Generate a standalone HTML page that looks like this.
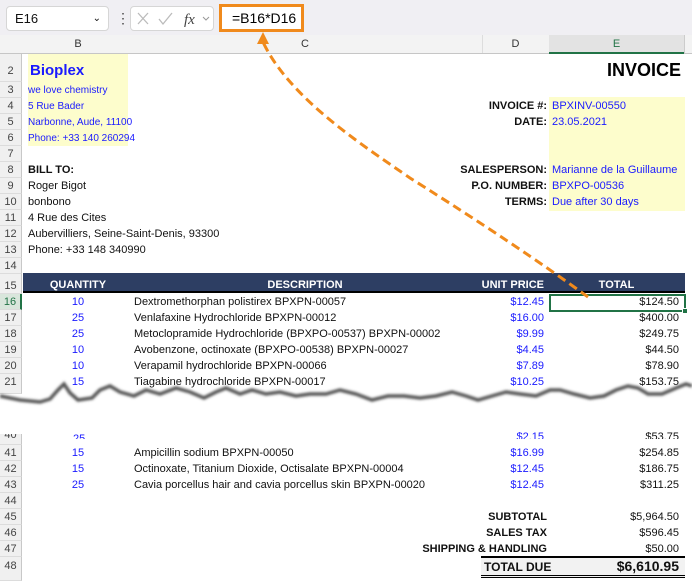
<!DOCTYPE html>
<html><head><meta charset="utf-8"><style>
*{margin:0;padding:0;box-sizing:border-box}
body{width:692px;height:581px;overflow:hidden;background:#fff;font-family:"Liberation Sans",sans-serif;font-size:11px;color:#111;position:relative}
.a{position:absolute;white-space:nowrap}
.rh{position:absolute;left:0;width:22px;background:#f0f0f0;border-right:1px solid #c8c8c8;border-bottom:1px solid #dcdcdc;text-align:center;color:#444;font-size:11px}
.bl{color:#1a1aff}
.b{font-weight:bold}
.r{text-align:right}
.c{text-align:center}
</style></head><body>
<div class="a" style="left:0;top:0;width:692px;height:35px;background:#f0eff3"></div>
<div class="a" style="left:6px;top:6px;width:103px;height:25px;background:#fff;border:1px solid #d6d6d6;border-radius:4px;font-size:13px;line-height:23px;padding-left:8px">E16<span style="position:absolute;right:7px;top:0;font-size:10px">&#8964;</span></div>
<div class="a" style="left:116px;top:10px;font-size:14px;color:#444;line-height:16px">&#8942;</div>
<div class="a" style="left:130px;top:6px;width:84px;height:25px;background:#fff;border:1px solid #d6d6d6;border-radius:4px"></div>
<svg class="a" style="left:130px;top:6px" width="84" height="25"><path d="M8 7l10 11M18 7L8 18" stroke="#bbb" stroke-width="1.3" fill="none"/><path d="M29 13l4 5 9-11" stroke="#bbb" stroke-width="1.3" fill="none"/><text x="54" y="18" font-family="Liberation Serif" font-style="italic" font-size="15" fill="#444">fx</text><path d="M73 11l3 3 3-3" stroke="#999" fill="none"/></svg>
<div class="a" style="left:219px;top:4px;width:85px;height:28px;border:3px solid #f08a1c;background:#fff;font-size:14px;line-height:22px;padding-left:10px;color:#000">=B16*D16</div>
<div class="a" style="left:0;top:35px;width:692px;height:19px;background:#f3f3f3;border-bottom:1px solid #c6c6c6"></div>
<div class="a c" style="left:28px;top:38px;width:100px;color:#333">B</div>
<div class="a c" style="left:128px;top:38px;width:354px;color:#333">C</div>
<div class="a" style="left:482px;top:35px;width:1px;height:18px;background:#ddd"></div>
<div class="a c" style="left:482px;top:38px;width:67px;color:#333">D</div>
<div class="a" style="left:549px;top:35px;width:135px;height:19px;background:#e3e3e3;border-bottom:2px solid #217346"></div>
<div class="a c" style="left:549px;top:38px;width:135px;color:#217346">E</div>
<div class="a" style="left:684px;top:35px;width:1px;height:18px;background:#ccc"></div>
<div class="rh" style="top:54px;height:28px;line-height:34px">2</div>
<div class="rh" style="top:82px;height:16px;line-height:16px">3</div>
<div class="rh" style="top:98px;height:16px;line-height:16px">4</div>
<div class="rh" style="top:114px;height:16px;line-height:16px">5</div>
<div class="rh" style="top:130px;height:16px;line-height:16px">6</div>
<div class="rh" style="top:146px;height:16px;line-height:16px">7</div>
<div class="rh" style="top:162px;height:16px;line-height:16px">8</div>
<div class="rh" style="top:178px;height:16px;line-height:16px">9</div>
<div class="rh" style="top:194px;height:16px;line-height:16px">10</div>
<div class="rh" style="top:210px;height:16px;line-height:16px">11</div>
<div class="rh" style="top:226px;height:16px;line-height:16px">12</div>
<div class="rh" style="top:242px;height:16px;line-height:16px">13</div>
<div class="rh" style="top:258px;height:16px;line-height:16px">14</div>
<div class="rh" style="top:274px;height:20px;line-height:24px">15</div>
<div class="rh" style="top:294px;height:16px;line-height:16px;background:#d9e6dc;color:#217346;border-right:2px solid #217346">16</div>
<div class="rh" style="top:310px;height:16px;line-height:16px">17</div>
<div class="rh" style="top:326px;height:16px;line-height:16px">18</div>
<div class="rh" style="top:342px;height:16px;line-height:16px">19</div>
<div class="rh" style="top:358px;height:16px;line-height:16px">20</div>
<div class="rh" style="top:374px;height:20px;line-height:16px">21</div>
<div class="rh" style="top:429px;height:16px;line-height:12px;overflow:hidden">40</div>
<div class="rh" style="top:445px;height:16px;line-height:16px">41</div>
<div class="rh" style="top:461px;height:16px;line-height:16px">42</div>
<div class="rh" style="top:477px;height:16px;line-height:16px">43</div>
<div class="rh" style="top:493px;height:16px;line-height:16px">44</div>
<div class="rh" style="top:509px;height:16px;line-height:16px">45</div>
<div class="rh" style="top:525px;height:16px;line-height:16px">46</div>
<div class="rh" style="top:541px;height:16px;line-height:16px">47</div>
<div class="rh" style="top:557px;height:24px;line-height:18px">48</div>
<div class="a" style="left:28px;top:54px;width:100px;height:92px;background:#fdfdcc"></div>
<div class="a" style="left:549px;top:97px;width:136px;height:114px;background:#fdfdcc"></div>
<div class="a b bl" style="left:30px;top:62px;font-size:15px">Bioplex</div>
<div class="a bl" style="left:28px;top:85px;font-size:10px">we love chemistry</div>
<div class="a bl" style="left:28px;top:101px;font-size:10px">5 Rue Bader</div>
<div class="a bl" style="left:28px;top:117px;font-size:10px">Narbonne, Aude, 11100</div>
<div class="a bl" style="left:28px;top:133px;font-size:10px">Phone: +33 140 260294</div>
<div class="a b" style="left:607px;top:60px;font-size:18px;color:#000">INVOICE</div>
<div class="a b r" style="left:400px;width:147px;top:100px">INVOICE #:</div>
<div class="a bl" style="left:552px;top:100px">BPXINV-00550</div>
<div class="a b r" style="left:400px;width:147px;top:116px">DATE:</div>
<div class="a bl" style="left:552px;top:116px">23.05.2021</div>
<div class="a b r" style="left:400px;width:147px;top:164px">SALESPERSON:</div>
<div class="a bl" style="left:552px;top:164px">Marianne de la Guillaume</div>
<div class="a b r" style="left:400px;width:147px;top:180px">P.O. NUMBER:</div>
<div class="a bl" style="left:552px;top:180px">BPXPO-00536</div>
<div class="a b r" style="left:400px;width:147px;top:196px">TERMS:</div>
<div class="a bl" style="left:552px;top:196px">Due after 30 days</div>
<div class="a b" style="left:28px;top:164px">BILL TO:</div>
<div class="a" style="left:28px;top:180px">Roger Bigot</div>
<div class="a" style="left:28px;top:196px">bonbono</div>
<div class="a" style="left:28px;top:212px">4 Rue des Cites</div>
<div class="a" style="left:28px;top:228px">Aubervilliers, Seine-Saint-Denis, 93300</div>
<div class="a" style="left:28px;top:244px">Phone: +33 148 340990</div>
<div class="a" style="left:23px;top:273px;width:662px;height:20px;background:#2d3e63;border-bottom:2px solid #000"></div>
<div class="a b c" style="left:28px;width:100px;top:279px;color:#fff">QUANTITY</div>
<div class="a b c" style="left:128px;width:354px;top:279px;color:#fff">DESCRIPTION</div>
<div class="a b r" style="left:460px;width:84px;top:279px;color:#fff">UNIT PRICE</div>
<div class="a b c" style="left:549px;width:135px;top:279px;color:#fff">TOTAL</div>
<div class="a bl c" style="left:28px;width:100px;top:296px">10</div><div class="a" style="left:134px;top:296px">Dextromethorphan polistirex BPXPN-00057</div><div class="a bl r" style="left:460px;width:84px;top:296px">$12.45</div><div class="a r" style="left:560px;width:119px;top:296px">$124.50</div>
<div class="a bl c" style="left:28px;width:100px;top:312px">25</div><div class="a" style="left:134px;top:312px">Venlafaxine Hydrochloride BPXPN-00012</div><div class="a bl r" style="left:460px;width:84px;top:312px">$16.00</div><div class="a r" style="left:560px;width:119px;top:312px">$400.00</div>
<div class="a bl c" style="left:28px;width:100px;top:328px">25</div><div class="a" style="left:134px;top:328px">Metoclopramide Hydrochloride (BPXPO-00537) BPXPN-00002</div><div class="a bl r" style="left:460px;width:84px;top:328px">$9.99</div><div class="a r" style="left:560px;width:119px;top:328px">$249.75</div>
<div class="a bl c" style="left:28px;width:100px;top:344px">10</div><div class="a" style="left:134px;top:344px">Avobenzone, octinoxate (BPXPO-00538) BPXPN-00027</div><div class="a bl r" style="left:460px;width:84px;top:344px">$4.45</div><div class="a r" style="left:560px;width:119px;top:344px">$44.50</div>
<div class="a bl c" style="left:28px;width:100px;top:360px">10</div><div class="a" style="left:134px;top:360px">Verapamil hydrochloride BPXPN-00066</div><div class="a bl r" style="left:460px;width:84px;top:360px">$7.89</div><div class="a r" style="left:560px;width:119px;top:360px">$78.90</div>
<div class="a bl c" style="left:28px;width:100px;top:376px">15</div><div class="a" style="left:134px;top:376px">Tiagabine hydrochloride BPXPN-00017</div><div class="a bl r" style="left:460px;width:84px;top:376px">$10.25</div><div class="a r" style="left:560px;width:119px;top:376px">$153.75</div>
<div class="a" style="left:549px;top:294px;width:137px;height:18px;border:2px solid #217346"></div>
<div class="a" style="left:682px;top:308px;width:6px;height:6px;background:#217346;border:1px solid #fff"></div>
<svg class="a" style="left:0;top:374px" width="692" height="60"><defs><filter id="s" x="-5%" y="-50%" width="110%" height="200%"><feGaussianBlur stdDeviation="1.4"/></filter></defs>
<path d="M0 20 L20 24 40 26 50 23 58 14 64 8 70 17 78 24 92 22 100 14 110 10 120 16 134 20 146 14 160 18 176 12 190 16 204 22 216 16 226 12 240 18 252 14 266 18 280 16 296 20 310 18 326 18 340 14 356 18 372 24 388 20 404 20 420 22 436 20 452 16 466 20 478 24 492 20 506 16 520 18 536 20 550 14 560 14 574 18 590 22 604 20 616 14 628 10 638 12 648 18 662 18 676 12 686 8 692 10 L692 60 L0 60Z" fill="#fff"/>
<path d="M0 20 L20 24 40 26 50 23 58 14 64 8 70 17 78 24 92 22 100 14 110 10 120 16 134 20 146 14 160 18 176 12 190 16 204 22 216 16 226 12 240 18 252 14 266 18 280 16 296 20 310 18 326 18 340 14 356 18 372 24 388 20 404 20 420 22 436 20 452 16 466 20 478 24 492 20 506 16 520 18 536 20 550 14 560 14 574 18 590 22 604 20 616 14 628 10 638 12 648 18 662 18 676 12 686 8 692 10" fill="none" stroke="#555" stroke-width="3.5" filter="url(#s)" transform="translate(0,2)"/></svg>
<div class="a bl" style="left:73px;top:433px;height:6px;overflow:hidden">25</div>
<div class="a bl r" style="left:460px;width:84px;top:431px;height:8px;overflow:hidden">$2.15</div>
<div class="a r" style="left:560px;width:119px;top:431px;height:8px;overflow:hidden">$53.75</div>
<div class="a bl c" style="left:28px;width:100px;top:447px">15</div><div class="a" style="left:134px;top:447px">Ampicillin sodium BPXPN-00050</div><div class="a bl r" style="left:460px;width:84px;top:447px">$16.99</div><div class="a r" style="left:560px;width:119px;top:447px">$254.85</div>
<div class="a bl c" style="left:28px;width:100px;top:463px">15</div><div class="a" style="left:134px;top:463px">Octinoxate, Titanium Dioxide, Octisalate BPXPN-00004</div><div class="a bl r" style="left:460px;width:84px;top:463px">$12.45</div><div class="a r" style="left:560px;width:119px;top:463px">$186.75</div>
<div class="a bl c" style="left:28px;width:100px;top:479px">25</div><div class="a" style="left:134px;top:479px">Cavia porcellus hair and cavia porcellus skin BPXPN-00020</div><div class="a bl r" style="left:460px;width:84px;top:479px">$12.45</div><div class="a r" style="left:560px;width:119px;top:479px">$311.25</div>
<div class="a b r" style="left:380px;width:167px;top:511px">SUBTOTAL</div><div class="a r" style="left:560px;width:119px;top:511px">$5,964.50</div>
<div class="a b r" style="left:380px;width:167px;top:527px">SALES TAX</div><div class="a r" style="left:560px;width:119px;top:527px">$596.45</div>
<div class="a b r" style="left:380px;width:167px;top:543px">SHIPPING &amp; HANDLING</div><div class="a r" style="left:560px;width:119px;top:543px">$50.00</div>
<div class="a" style="left:481px;top:556px;width:204px;height:22px;background:#f2f2f2;border-top:2px solid #000;border-bottom:3px double #000"></div>
<div class="a b" style="left:484px;top:560px;font-size:12px">TOTAL DUE</div>
<div class="a b r" style="left:560px;width:119px;top:558px;font-size:14px">$6,610.95</div>
<svg class="a" style="left:0;top:0" width="692" height="581"><path d="M588 297 C540 262 480 222 410 178 C370 150 290 100 263 42" stroke="#f08a1c" stroke-width="3" stroke-dasharray="9 5" fill="none"/><path d="M257 44 L263 32 L269 44Z" fill="#f08a1c"/></svg>
</body></html>
